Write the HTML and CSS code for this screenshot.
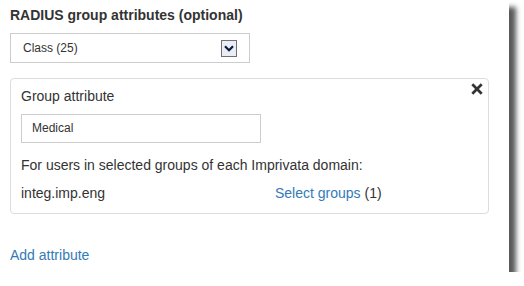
FILE: index.html
```html
<!DOCTYPE html>
<html>
<head>
<meta charset="utf-8">
<link rel="stylesheet" href="styles.css">
</head>
<body>
<div class="panel">
  <h2 class="title">RADIUS group attributes (optional)</h2>
  <div class="select">
    <span class="select-text">Class (25)</span>
    <span class="select-btn">
      <svg width="10" height="7" viewBox="0 0 10 7"><path d="M1 1.2 L5 5.2 L9 1.2" fill="none" stroke="#0b1a3a" stroke-width="2.2"/></svg>
    </span>
  </div>
  <div class="card">
    <span class="close">
      <svg width="12" height="12" viewBox="0 0 12 12"><path d="M1.3 1.3 L10.7 10.7 M10.7 1.3 L1.3 10.7" stroke="#333" stroke-width="2.7" stroke-linecap="butt"/></svg>
    </span>
    <div class="label">Group attribute</div>
    <div class="input">Medical</div>
    <div class="text">For users in selected groups of each Imprivata domain:</div>
    <div class="row">
      <span class="domain">integ.imp.eng</span>
      <span><a class="link">Select groups</a> (1)</span>
    </div>
  </div>
  <a class="link add">Add attribute</a>
</div>
</body>
</html>
```
FILE: styles.css
```css
html, body {
  margin: 0;
  padding: 0;
  background: #fff;
}
body {
  font-family: "Liberation Sans", Arial, sans-serif;
  color: #333;
  font-size: 14px;
}
.panel {
  width: 509px;
  height: 272px;
  box-sizing: border-box;
  padding: 5px 0 0 10px;
  background: #fff;
  box-shadow: 7px 7px 5px rgba(0,0,0,0.65);
}
.title {
  margin: 0;
  font-size: 14px;
  font-weight: bold;
  line-height: 20px;
}
.select {
  margin-top: 8px;
  width: 240px;
  height: 30px;
  box-sizing: border-box;
  border: 1px solid #ccc;
  display: flex;
  align-items: center;
  justify-content: space-between;
  padding: 0 12px 0 12px;
}
.select-text {
  font-size: 12px;
}
.select-btn {
  width: 16px;
  height: 17px;
  box-sizing: border-box;
  border: 1px solid #707070;
  background: #e9edf5;
  display: flex;
  align-items: center;
  justify-content: center;
}
.card {
  position: relative;
  margin-top: 15px;
  width: 479px;
  height: 136px;
  box-sizing: border-box;
  border: 1px solid #ddd;
  border-radius: 4px;
  padding: 7px 10px 0 10px;
}
.close {
  position: absolute;
  top: 4px;
  right: 5px;
  line-height: 0;
}
.label {
  line-height: 20px;
}
.input {
  margin-top: 8px;
  width: 240px;
  height: 29px;
  box-sizing: border-box;
  border: 1px solid #ccc;
  font-size: 12px;
  line-height: 27px;
  padding-left: 10px;
}
.text {
  margin-top: 12px;
  line-height: 20px;
}
.row {
  margin-top: 8px;
  display: flex;
  line-height: 20px;
}
.domain {
  width: 254px;
}
.link {
  color: #337ab7;
  text-decoration: none;
}
.add {
  display: block;
  margin-top: 31px;
  line-height: 20px;
}
```
